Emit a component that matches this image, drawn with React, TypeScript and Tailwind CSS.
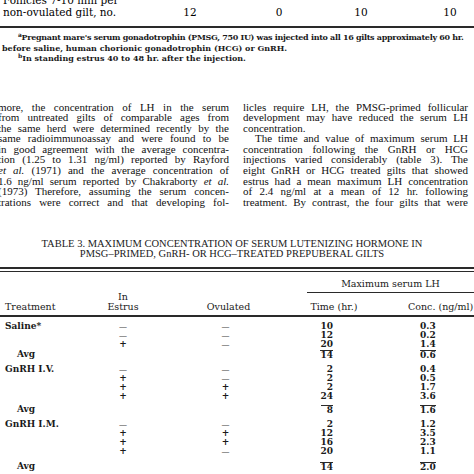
const serif = "font-['Liberation_Serif','Times_New_Roman',serif]"
const school = "font-['DejaVu_Serif',serif]"

const leftLines: React.ReactNode[] = [
  "more, the concentration of LH in the serum",
  "from untreated gilts of comparable ages from",
  "the same herd were determined recently by the",
  "same radioimmunoassay and were found to be",
  "in good agreement with the average concentra-",
  "tion (1.25 to 1.31 ng/ml) reported by Rayford",
  <>
    <i>et al.</i> (1971) and the average concentration of
  </>,
  <>
    1.6 ng/ml serum reported by Chakraborty <i>et al.</i>
  </>,
  "(1973) Therefore, assuming the serum concen-",
  "trations were correct and that developing fol-",
]

const rightLines: { text: string; last?: boolean; indent?: boolean }[] = [
  { text: "licles require LH, the PMSG-primed follicular" },
  { text: "development may have reduced the serum LH" },
  { text: "concentration.", last: true },
  { text: "The time and value of maximum serum LH", indent: true },
  { text: "concentration following the GnRH or HCG" },
  { text: "injections varied considerably (table 3). The" },
  { text: "eight GnRH or HCG treated gilts that showed" },
  { text: "estrus had a mean maximum LH concentration" },
  { text: "of 2.4 ng/ml at a mean of 12 hr. following" },
  { text: "treatment. By contrast, the four gilts that were" },
]

type Group = {
  name: string
  rows: [string, string, string, string][]
  avg: [string, string]
  avgPad: string
}

const groups: Group[] = [
  {
    name: "Saline*",
    rows: [
      ["—", "—", "10", "0.3"],
      ["—", "—", "12", "0.2"],
      ["+", "—", "20", "1.4"],
    ],
    avg: ["14", "0.6"],
    avgPad: "pt-[1px]",
  },
  {
    name: "GnRH I.V.",
    rows: [
      ["—", "—", "2", "0.4"],
      ["+", "—", "2", "0.5"],
      ["+", "+", "2", "1.7"],
      ["+", "+", "24", "3.6"],
    ],
    avg: ["8", "1.6"],
    avgPad: "pt-[4px]",
  },
  {
    name: "GnRH I.M.",
    rows: [
      ["—", "—", "2", "1.2"],
      ["+", "+", "12", "3.5"],
      ["+", "+", "16", "2.3"],
      ["+", "—", "20", "1.1"],
    ],
    avg: ["14", "2.0"],
    avgPad: "pt-[6px]",
  },
]

const cols = "grid grid-cols-[93px_60px_145px_72px_104px]"

function Mark({ v }: { v: string }) {
  return v === "+" ? (
    <span className="font-bold text-[9px]">+</span>
  ) : (
    <span className="text-[8px]">—</span>
  )
}

function TopTable() {
  return (
    <div className={`${school} text-[10.5px] leading-[12px] mt-[-6px] text-black`}>
      <div className="pl-[3px]">Follicles 7-10 mm per</div>
      <div className="flex">
        <div className="w-[170px] pl-[3px] whitespace-nowrap">non-ovulated gilt, no.</div>
        <div className="w-[40px] text-center">12</div>
        <div className="w-[40px] ml-[49px] text-center">0</div>
        <div className="w-[40px] ml-[42px] text-center">10</div>
        <div className="w-[40px] ml-[49px] text-center">10</div>
      </div>
      <div className="mt-[8px] h-[2px] bg-[#2a2a2a]" />
    </div>
  )
}

function Footnotes() {
  return (
    <div className={`${school} font-bold text-[8px] leading-[10.5px] mt-[4px]`}>
      <div className="pl-[18px] whitespace-nowrap tracking-[-0.3px]">
        <sup className="text-[6px]">a</sup>Pregnant mare's serum gonadotrophin (PMSG, 750 IU) was injected into all 16 gilts approximately 60 hr.
      </div>
      <div className="pl-[2px]">before saline, human chorionic gonadotrophin (HCG) or GnRH.</div>
      <div className="pl-[18px]">
        <sup className="text-[6px]">b</sup>In standing estrus 40 to 48 hr. after the injection.
      </div>
    </div>
  )
}

function BodyColumns() {
  return (
    <div className={`${serif} text-[11px] leading-[10.6px] flex mt-[38px] text-[#111]`}>
      <div className="ml-[-2px] w-[231px]">
        {leftLines.map((l, i) => (
          <div key={i} className="text-justify [text-align-last:justify]">
            {l}
          </div>
        ))}
      </div>
      <div className="ml-[14px] w-[225px]">
        {rightLines.map((l, i) => (
          <div
            key={i}
            className={`${l.last ? "text-left" : "text-justify [text-align-last:justify]"} ${l.indent ? "pl-[12px]" : ""}`}
          >
            {l.text}
          </div>
        ))}
      </div>
    </div>
  )
}

function Table3() {
  return (
    <div className="mt-[32px]">
      <div className={`${serif} text-[10.5px] leading-[10px] text-center pr-[10px]`}>
        <div>TABLE 3. MAXIMUM CONCENTRATION OF SERUM LUTENIZING HORMONE IN</div>
        <div>PMSG–PRIMED, GnRH- OR HCG–TREATED PREPUBERAL GILTS</div>
      </div>
      <div className="mt-[8px] h-[2px] bg-[#2a2a2a]" />
      <div className="mt-[2px] h-[1px] bg-[#2a2a2a]" />

      {/* header */}
      <div className={`${school} text-[9.5px] leading-[10px] flex items-end`}>
        <div className="flex items-end w-[298px]">
          <div className="w-[93px] pl-[5px]">Treatment</div>
          <div className="w-[60px] text-center">
            <div>In</div>
            <div>Estrus</div>
          </div>
          <div className="w-[145px] text-center pl-[6px]">Ovulated</div>
        </div>
        <div className="flex-1">
          <div className="mt-[7px] ml-[9px] pb-[3px] border-b border-[#2a2a2a] text-center">Maximum serum LH</div>
          <div className="flex mt-[9px]">
            <div className="w-[72px] text-center">Time (hr.)</div>
            <div className="pl-[38px] whitespace-nowrap">Conc. (ng/ml)</div>
          </div>
        </div>
      </div>
      <div className="mt-[3px] h-[1.5px] bg-[#2a2a2a]" />

      {/* body */}
      <div className={`${school} text-[9px] leading-[9px] mt-[5px]`}>
        {groups.map((g, gi) => (
          <div key={g.name} className={gi > 0 ? "mt-[5px]" : ""}>
            {g.rows.map((r, ri) => (
              <div key={ri} className={cols}>
                <div className="pl-[5px] font-bold whitespace-nowrap">{ri === 0 ? g.name : ""}</div>
                <div className="text-center">
                  <Mark v={r[0]} />
                </div>
                <div className="text-center">
                  <Mark v={r[1]} />
                </div>
                <div className="text-right pr-[37px] font-bold">{r[2]}</div>
                <div className="pl-[50px] font-bold">{r[3]}</div>
              </div>
            ))}
            <div className={`${cols} ${g.avgPad}`}>
              <div className="pl-[17px] font-bold">Avg</div>
              <div />
              <div />
              <div className="text-right pr-[37px] font-bold">
                <span className="inline-block border-t border-[#2a2a2a] min-w-[12px] text-right">{g.avg[0]}</span>
              </div>
              <div className="pl-[50px] font-bold">
                <span className="inline-block border-t border-[#2a2a2a]">{g.avg[1]}</span>
              </div>
            </div>
          </div>
        ))}
      </div>
    </div>
  )
}

export default function App() {
  return (
    <div className="w-[474px] h-[474px] overflow-hidden bg-white text-[#1a1a1a]">
      <TopTable />
      <Footnotes />
      <BodyColumns />
      <Table3 />
    </div>
  )
}
